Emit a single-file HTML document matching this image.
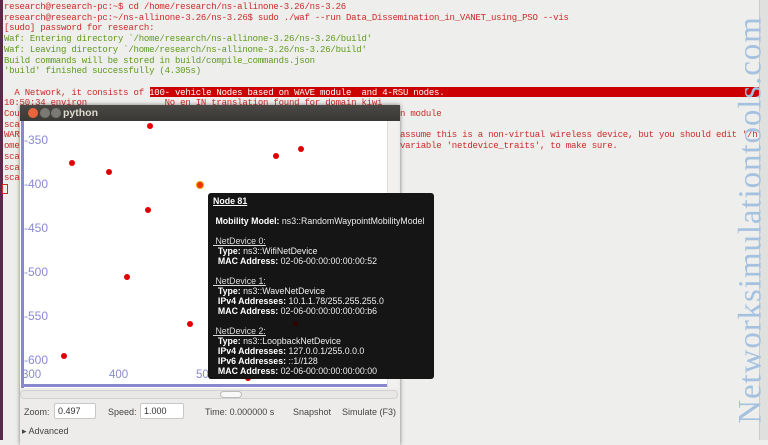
<!DOCTYPE html>
<html><head><meta charset="utf-8"><style>
*{margin:0;padding:0;box-sizing:border-box}
body{width:768px;height:440px;overflow:hidden;background:#eeeeec;position:relative;font-family:"Liberation Sans",sans-serif}
.t{position:absolute;font-family:"Liberation Mono",monospace;font-size:9px;letter-spacing:-0.22px;line-height:10.7px;color:#cc2a2a;white-space:pre}
.g{color:#5f9a1f}
.win{position:absolute;left:20px;top:105px;width:380px;height:340px;background:#edeceb;box-shadow:0 0 4px rgba(0,0,0,.5)}
.tb{height:16px;background:linear-gradient(#4a4945,#3a3935);position:relative}
.b{position:absolute;top:3px;width:10px;height:10px;border-radius:50%}
.plot{position:absolute;left:0;top:16px;width:367px;height:267px;background:#fff}
.yl{position:absolute;left:4px;font-size:12px;color:#8a8ad0}
.xl{position:absolute;top:248px;font-size:11.5px;color:#8a8ad0}
.d{position:absolute;width:6px;height:6px;border-radius:50%;background:#e00000}
.tip{position:absolute;left:208px;top:193px;width:226px;height:186px;background:#151515;border-radius:3px;color:#eee;font-size:8.8px;line-height:10px;padding:3px 5px;white-space:nowrap;overflow:hidden}
.tip b{color:#fff}
.u{text-decoration:underline;color:#ddd}
.ctl{position:absolute;font-size:9px;color:#444}
.inp{position:absolute;height:16px;background:#fff;border:1px solid #c8c8c8;border-radius:2px;font-size:9px;padding:2px 3px;color:#333}
</style></head><body>
<div style="position:absolute;left:0;top:0;width:3px;height:440px;background:#5a2a4a"></div>
<div style="position:absolute;left:150px;top:87px;width:609px;height:10px;background:#cc0000"></div>
<div class="t" style="left:4px;top:2px">research@research-pc:~$ cd /home/research/ns-allinone-3.26/ns-3.26
research@research-pc:~/ns-allinone-3.26/ns-3.26$ sudo ./waf --run Data_Dissemination_in_VANET_using_PSO --vis
[sudo] password for research:
<span class="g">Waf: Entering directory `/home/research/ns-allinone-3.26/ns-3.26/build'
Waf: Leaving directory `/home/research/ns-allinone-3.26/ns-3.26/build'
Build commands will be stored in build/compile_commands.json
'build' finished successfully (4.305s)</span>

  A Network, it consists of <span style="color:#fff">100- vehicle Nodes based on WAVE module  and 4-RSU nodes.</span>
10:50:34 environ               No en_IN translation found for domain kiwi
Couldn't
scan
WARNING
ome,
scan
scan
scan</div>
<div class="t" style="left:400px;top:108.7px">n module

assume this is a non-virtual wireless device, but you should edit '/h
variable 'netdevice_traits', to make sure.</div>
<div style="position:absolute;left:2px;top:184px;width:6px;height:10px;border:1px solid #cc2a2a"></div>
<div style="position:absolute;left:759px;top:0;width:9px;height:440px;background:#e0e0de;border-left:1px solid #ccc"></div>
<div style="position:absolute;left:751px;top:220px;transform:translate(-50%,-50%) rotate(-90deg);font-family:'Liberation Serif',serif;font-size:33px;color:#a4c2e0;white-space:nowrap;letter-spacing:0.9px">Networksimulationtools.com</div>

<div class="win">
<div class="tb">
<div class="b" style="left:8px;background:#e9643a"></div>
<div class="b" style="left:20px;background:#7a7974"></div>
<div class="b" style="left:31px;background:#7a7974"></div>
<div style="position:absolute;left:43px;top:2px;font-size:10.5px;font-weight:bold;color:#dfdbd2">python</div>
</div>
<div class="plot">
<div style="position:absolute;left:1px;top:0;width:3px;height:267px;background:#8888cc"></div>
<div style="position:absolute;left:1px;top:263px;width:366px;height:3px;background:#8888cc"></div>
<div class="yl" style="top:12px">-350</div>
<div class="yl" style="top:56px">-400</div>
<div class="yl" style="top:100px">-450</div>
<div class="yl" style="top:144px">-500</div>
<div class="yl" style="top:188px">-550</div>
<div class="yl" style="top:232px">-600</div>
<div class="xl" style="left:2px">300</div>
<div class="xl" style="left:89px">400</div>
<div class="xl" style="left:176px">500</div>
<div class="xl" style="left:264px">600</div>
<div class="xl" style="left:350px">700</div>
</div>
<div style="position:absolute;left:367px;top:16px;width:11px;height:267px;background:#f2f1f0;border-left:1px solid #ddd"></div>
<div style="position:absolute;left:0;top:285px;width:378px;height:9px;background:#e8e7e6;border:1px solid #d2d2d2;border-radius:4px"></div>
<div style="position:absolute;left:200px;top:286px;width:22px;height:7px;background:#f8f8f8;border:1px solid #bbb;border-radius:4px"></div>
<div class="ctl" style="left:4px;top:302px">Zoom:</div>
<div class="inp" style="left:34px;top:298px;width:42px">0.497</div>
<div class="ctl" style="left:88px;top:302px">Speed:</div>
<div class="inp" style="left:120px;top:298px;width:44px">1.000</div>
<div class="ctl" style="left:185px;top:302px">Time: 0.000000 s</div>
<div class="ctl" style="left:273px;top:302px">Snapshot</div>
<div class="ctl" style="left:322px;top:302px">Simulate (F3)</div>
<div class="ctl" style="left:2px;top:321px">▸ Advanced</div>
</div>

<div class="d" style="left:61px;top:353px"></div>
<div class="d" style="left:147px;top:123px"></div>
<div class="d" style="left:69px;top:160px"></div>
<div class="d" style="left:106px;top:169px"></div>
<div class="d" style="left:145px;top:207px"></div>
<div class="d" style="left:197px;top:182px;background:#ee3300;box-shadow:0 0 0 1px #f0a000"></div>
<div class="d" style="left:273px;top:153px"></div>
<div class="d" style="left:298px;top:146px"></div>
<div class="d" style="left:124px;top:274px"></div>
<div class="d" style="left:187px;top:321px"></div>
<div class="d" style="left:245px;top:375px"></div>

<div class="tip">
<div class="u" style="font-weight:bold;color:#fff">Node 81</div>
<div style="height:10px"></div>
<div>&nbsp;<b>Mobility Model:</b> ns3::RandomWaypointMobilityModel</div>
<div style="height:10px"></div>
<div class="u">&nbsp;NetDevice 0:</div>
<div>&nbsp;&nbsp;<b>Type:</b> ns3::WifiNetDevice</div>
<div>&nbsp;&nbsp;<b>MAC Address:</b> 02-06-00:00:00:00:00:52</div>
<div style="height:10px"></div>
<div class="u">&nbsp;NetDevice 1:</div>
<div>&nbsp;&nbsp;<b>Type:</b> ns3::WaveNetDevice</div>
<div>&nbsp;&nbsp;<b>IPv4 Addresses:</b> 10.1.1.78/255.255.255.0</div>
<div>&nbsp;&nbsp;<b>MAC Address:</b> 02-06-00:00:00:00:00:b6</div>
<div style="height:10px"></div>
<div class="u">&nbsp;NetDevice 2:</div>
<div>&nbsp;&nbsp;<b>Type:</b> ns3::LoopbackNetDevice</div>
<div>&nbsp;&nbsp;<b>IPv4 Addresses:</b> 127.0.0.1/255.0.0.0</div>
<div>&nbsp;&nbsp;<b>IPv6 Addresses:</b> ::1//128</div>
<div>&nbsp;&nbsp;<b>MAC Address:</b> 02-06-00:00:00:00:00:00</div>
</div>
<div style="position:absolute;left:293px;top:321px;width:5px;height:5px;border-radius:50%;background:#300"></div>
</body></html>
